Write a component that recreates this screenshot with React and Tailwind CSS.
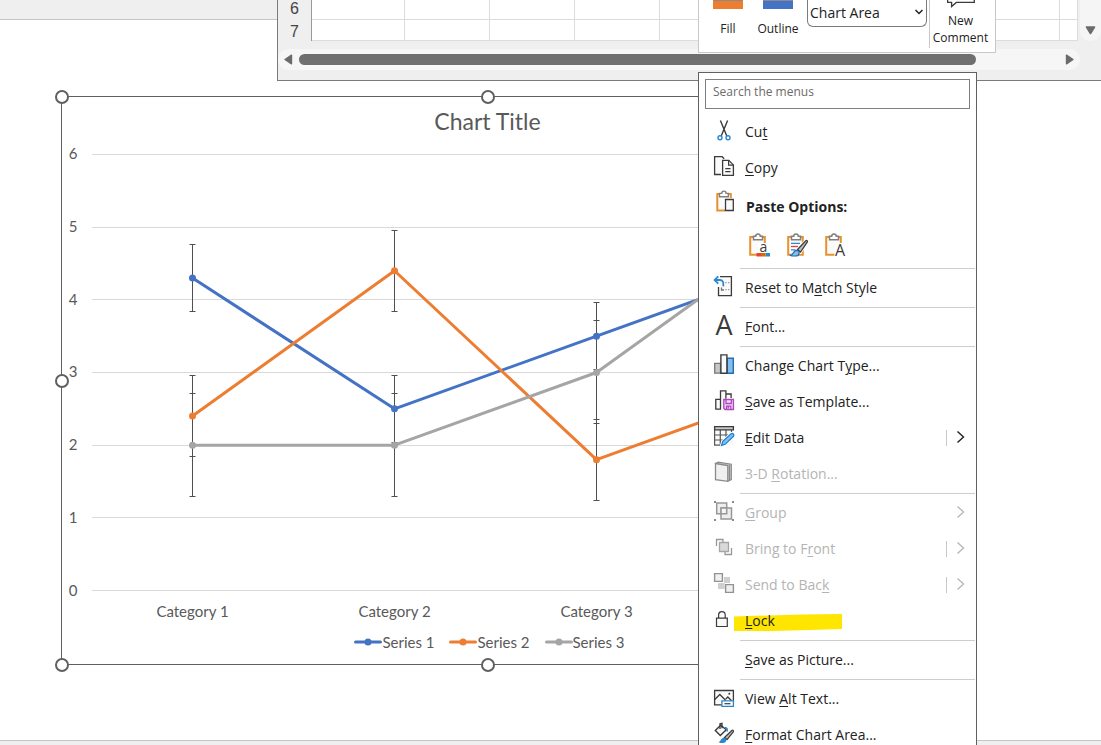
import React from "react";

const INK = "#3b3b3b";
const MUTED = "#a6a6a6";

function Icon({ children, className = "" }) {
  return (
    <svg width="24" height="24" viewBox="-2 -2 24 24" fill="none" aria-hidden="true" className={`shrink-0 overflow-visible ${className}`}>
      {children}
    </svg>
  );
}

function Clipboard() {
  return (
    <>
      <path d="M5.5 2H2.2v17.8h14.6V2h-3.3" fill="#fafafa" stroke="#e8912d" strokeWidth="2" />
      <path d="M5.5 4.7V1.2h2.2c0-3 4.6-3 4.6 0h2.2v3.5z" fill="#fff" stroke="#808080" strokeWidth="1.5" />
    </>
  );
}

const icons = {
  cut: (
    <Icon>
      <path d="M6.4-1.6 12.8 14M13.6-1.6 7.2 14" stroke={INK} strokeWidth="1.4" />
      <circle cx="6" cy="15.7" r="2" fill="#fff" stroke="#2b88d0" strokeWidth="1.4" />
      <circle cx="14" cy="15.7" r="2" fill="#fff" stroke="#2b88d0" strokeWidth="1.4" />
    </Icon>
  ),
  copy: (
    <Icon>
      <path d="M7 16.5H.6V-1.3h7.6l2 2" fill="#fafafa" stroke={INK} strokeWidth="1.3" />
      <path d="M8.6 2.3h6.2l4.6 4.6v10.5H8.6z" fill="#fafafa" stroke={INK} strokeWidth="1.3" />
      <path d="M14.6 2.3v4.8h4.8M11.3 10.7h5.2M11.3 13.7h5.2" stroke={INK} strokeWidth="1.2" />
    </Icon>
  ),
  paste: (
    <Icon>
      <path d="M6 2H3.3v16.5H11M14 2h2.8v4" fill="#fafafa" stroke="#e8912d" strokeWidth="2" />
      <path d="M5.5 4.7V1.4h2.2c0-3 4.4-3 4.4 0h2.2v3.3z" fill="#fff" stroke="#808080" strokeWidth="1.4" />
      <path d="M11.5 7.5h7.8v11h-7.8z" fill="#fafafa" stroke={INK} strokeWidth="1.3" />
    </Icon>
  ),
  reset: (
    <Icon>
      <path d="M4.500-1.300h12.900v18.900H4.500z" fill="#fafafa" />
      <path d="M6-1.300h11.400v18.900H4.500V9" stroke={INK} strokeWidth="1.300" />
      <path d="M11.500 4.700h1m1.800 0h1M11.500 11.700h1m1.800 0h1M7.500 9.500v2.500h2.500" stroke="#777" strokeWidth="1.300" />
      <path d="M.8 2h5c3 0 4 2.400 3.500 6.300M4.300-1.700.6 2l3.700 3.700" stroke="#fafafa" strokeWidth="3" />
      <path d="M.8 2h5c3 0 4 2.400 3.500 6.300M4.300-1.700.6 2l3.700 3.700" stroke="#2b88d0" strokeWidth="1.800" />
    </Icon>
  ),
  font: (
    <Icon>
      <text x="10" y="17.500" textAnchor="middle" fontSize="27" fill={INK} className="font-['Open_Sans',sans-serif]">A</text>
    </Icon>
  ),
  chart: (
    <Icon>
      <path d="M.7 7.300h5.800v9.900H.7z" fill="#c8c8c8" stroke="#777" strokeWidth="1.300" />
      <path d="M13.300 2.300h6v14.900h-6z" fill="#83beec" stroke="#1e6fb8" strokeWidth="1.400" />
      <path d="M6.900-1.100h6v18.300h-6z" fill="#fafafa" stroke={INK} strokeWidth="1.400" />
    </Icon>
  ),
  template: (
    <Icon>
      <path d="M1.800 7.300h4.700v9.900H1.800zM6.500 17.200V-1.200h5.400v8M11.900 2h5.200v4" fill="#fafafa" stroke={INK} strokeWidth="1.300" />
      <path d="M9.800 7.500h9.600v10H11l-1.200-1.300z" fill="#f1dff3" stroke="#b146c2" strokeWidth="1.400" />
      <path d="M12 7.500v4h5.300v-4M12.500 17.300v-3.200h4.300v3.200M14.300 14.500v2" stroke="#b146c2" strokeWidth="1.300" />
    </Icon>
  ),
  edit: (
    <Icon>
      <path d="M.6-1.200h18.800v18H.6z" fill="#fafafa" />
      <path d="M.6 2v15.200h6.500M6.300 2v15M12 2v9M.6 7h14M.6 12h10M17.500 2v3" stroke="#555" strokeWidth="1.200" />
      <path d="M.6-1.300h18.800v3.100H.6z" fill="#c8c8c8" stroke={INK} strokeWidth="1.300" />
      <path d="m7.500 17.500 1.300-4.200 8.300-7.500c1.600-1.200 3.700.8 2.400 2.500l-8 7.800z" fill="#83beec" stroke="#fff" strokeWidth="3" />
      <path d="m7.500 17.500 1.300-4.200 8.300-7.500c1.600-1.200 3.700.8 2.400 2.500l-8 7.800z" fill="#83beec" stroke="#1e7fd0" strokeWidth="1.200" />
    </Icon>
  ),
  rotate: (
    <Icon>
      <path d="m1.500-.5 2.700-1.300L17.300.2v15.400l-3.500 1.700z" fill="#c8c8c8" stroke="#8a8a8a" strokeWidth="1.200" />
      <path d="m1.500-.5 12.300 2v15.800L1.500 15.600z" fill="#f0f0f0" stroke="#8a8a8a" strokeWidth="1.300" />
      <path d="M15.500 1v15.300" stroke="#8a8a8a" />
    </Icon>
  ),
  group: (
    <Icon>
      <path d="M2.700 0h10v10.700h-10z" fill="#eee" stroke="#989898" strokeWidth="1.500" />
      <path d="M7 5h10.500v11H7z" fill="#eee" stroke="#989898" strokeWidth="1.500" />
      <path d="M7 5h5.700v5.700H7z" fill="#f6f6f6" stroke="#989898" strokeWidth="1.500" />
      <path d="M0-2h2v2H0zM18-2h2v2h-2zM0 16h2v2H0zM18 16h2v2h-2z" fill="#8a8a8a" />
    </Icon>
  ),
  front: (
    <Icon>
      <path d="M2.500 7V.500H9v3M17.500 9v6.500H11v-3" stroke="#989898" strokeWidth="1.300" />
      <path d="M5.500 3.500h9v9h-9z" fill="#d9d9d9" stroke={MUTED} strokeWidth="1.300" />
    </Icon>
  ),
  back: (
    <Icon>
      <path d="M10 2h6v6h-6zM4 8h6.500v6H4z" fill="#d0d0d0" />
      <path d="M.6-1.400h7.800v7.800H.6zM11.600 9.600h7.800v7.800h-7.800z" fill="#f0f0f0" stroke="#929292" strokeWidth="1.400" />
    </Icon>
  ),
  lock: (
    <Icon>
      <path d="M2.500 7.200h10.800v8.300H2.500z" fill="#fafafa" stroke={INK} strokeWidth="1.200" />
      <path d="M4.600 7V4c0-4.400 6.600-4.400 6.600 0v3" stroke={INK} strokeWidth="1.200" />
    </Icon>
  ),
  alt: (
    <Icon>
      <path d="M.6 1.500h18.800v14.300H.6z" fill="#fafafa" stroke={INK} strokeWidth="1.300" />
      <path d="m.8 10.500 5-5 6 6m0-1.500 2-2 4 4" stroke={INK} strokeWidth="1.300" />
      <circle cx="15.300" cy="4.700" r="1" fill={INK} />
      <path d="M7.900 11.900h11.500v5.500H7.900z" fill="#fff" stroke="#2b88d0" strokeWidth="1.300" />
      <path d="M10.500 14.700h6" stroke={INK} strokeWidth="1.200" />
    </Icon>
  ),
  format: (
    <Icon>
      <path d="m1.300 5.500 5.400-5.300 5.600 4.600-6 5.800z" fill="#fafafa" stroke={INK} strokeWidth="1.400" />
      <path d="M6 4V-1.200l2-.5v5" stroke={INK} strokeWidth="1.300" />
      <path d="M11 2.500c2 0 2.500 1.500 2 4" stroke="#2b88d0" strokeWidth="1.600" />
      <path d="m10.500 12.500 7.300-7c1.300-.8 2.200.4 1.500 1.500L13 14.700z" fill="#bbb" stroke={INK} strokeWidth="1.200" />
      <path d="M4.500 17c2.500 0 2.300-4.200 5.300-4.200 3.400.4 3.200 5.200-.8 5.200-2 0-3.500 0-4.500-1z" fill="#2b88d0" />
    </Icon>
  ),
};

// An underscore marks the access key that follows it.
function Label({ text }) {
  const at = text.indexOf("_");
  if (at < 0) return text;
  return (
    <>
      {text.slice(0, at)}
      <u className="underline decoration-1 underline-offset-2">{text[at + 1]}</u>
      {text.slice(at + 2)}
    </>
  );
}

function Item({ icon, text, disabled, arrow, split, highlight }) {
  return (
    <button
      type="button"
      role="menuitem"
      disabled={disabled}
      className="relative isolate flex h-9 w-full items-center gap-[9px] pr-2.5 pl-[13px] text-left text-[#222] disabled:text-[#b4b4b4]"
    >
      {highlight && (
        <svg aria-hidden="true" width="108" height="18" viewBox="0 0 108 18" className="absolute top-[11px] left-[35px] -z-10">
          <path d="M0 2.500 66 .5l42-.5v15L40 17H0z" fill="#ffe600" />
        </svg>
      )}
      {icon ? icons[icon] : <span className="w-6 shrink-0" />}
      <span className="flex-1 whitespace-nowrap">
        <Label text={text} />
      </span>
      {split && <span className="h-4 w-px bg-[#c8c8c8]" />}
      {arrow && (
        <svg aria-hidden="true" width="10" height="14" viewBox="0 0 10 14" fill="none" className={disabled ? "text-[#b8b8b8]" : "text-[#222]"}>
          <path d="m1.500 .5 6 5.500-6 5.500" stroke="currentColor" strokeWidth="1.400" />
        </svg>
      )}
    </button>
  );
}

function Separator() {
  return <div role="separator" className="my-px mr-px ml-[41px] h-px bg-[#cdcdcd]" />;
}

function ContextMenu() {
  return (
    <div
      role="menu"
      className="absolute top-[72px] left-[698px] w-[279px] border border-[#606060] bg-white font-['Open_Sans','Noto_Sans',sans-serif] text-[14px] leading-5"
    >
      <div className="px-1.5 pt-1.5 pb-[5px]">
        <input
          type="text"
          aria-label="Search the menus"
          placeholder="Search the menus"
          className="block h-[30px] w-full border border-[#7f7f7f] bg-white px-[7px] pb-1.5 text-[12px] placeholder:text-[#6b6b6b]"
        />
      </div>
      <Item icon="cut" text="Cu_t" />
      <Item icon="copy" text="_Copy" />
      <div className="flex h-[41px] items-center gap-2.5 pl-[13px] font-bold text-[#222]">
        <div className="flex h-full items-start pt-1">{icons.paste}</div>
        <span>Paste Options:</span>
      </div>
      <div className="flex h-10 gap-3.5 pt-1.5 pl-[47px]">
        <button type="button" aria-label="Use destination theme" className="size-6">
          <Icon>
            <Clipboard />
            <path d="M9.500 8h14v14h-14z" fill="#fff" />
            <text x="15.500" y="16.500" textAnchor="middle" fontSize="14" fill={INK} className="font-['Open_Sans',sans-serif]">a</text>
            <path d="M8.500 18H13v3.500H8.500z" fill="#e8413c" />
            <path d="M13 18h4.700v3.500H13z" fill="#d86a00" />
            <path d="M17.700 18H22v3.500h-4.300z" fill="#2b88d0" />
          </Icon>
        </button>
        <button type="button" aria-label="Keep source formatting" className="size-6">
          <Icon>
            <Clipboard />
            <path d="M5 8.300h9M5 14.800h5" stroke="#2b88d0" strokeWidth="1.300" />
            <path d="M5 11.500h7" stroke="#e8413c" strokeWidth="1.300" />
            <path d="m11.500 14.500 8.300-8.700c1-.8 2.200.3 1.500 1.400L14.500 17z" fill="#bbb" stroke="#fff" strokeWidth="3" />
            <path d="m11.500 14.500 8.300-8.700c1-.8 2.200.3 1.500 1.400L14.500 17z" fill="#bbb" stroke={INK} strokeWidth="1.200" />
            <path d="M4.500 20.300c3 0 2.500-4.800 6-5 3.800.4 3.600 5.700-1 5.700-2 0-4 .2-5-.7z" fill="#83beec" stroke="#1e6fb8" strokeWidth="1.200" />
          </Icon>
        </button>
        <button type="button" aria-label="Keep text only" className="size-6">
          <Icon>
            <Clipboard />
            <path d="M12 8h10v14H10z" fill="#fff" />
            <text x="16" y="20.500" textAnchor="middle" fontSize="16" fill={INK} className="font-['Open_Sans',sans-serif]">A</text>
          </Icon>
        </button>
      </div>
      <Separator />
      <Item icon="reset" text="Reset to M_atch Style" />
      <Separator />
      <Item icon="font" text="_Font..." />
      <Separator />
      <Item icon="chart" text="Change Chart T_ype..." />
      <Item icon="template" text="_Save as Template..." />
      <Item icon="edit" text="_Edit Data" arrow split />
      <Item icon="rotate" text="3-D _Rotation..." disabled />
      <Separator />
      <Item icon="group" text="_Group" disabled arrow />
      <Item icon="front" text="Bring to F_ront" disabled arrow split />
      <Item icon="back" text="Send to Bac_k" disabled arrow split />
      <Item icon="lock" text="_Lock" highlight />
      <Separator />
      <Item text="_Save as Picture..." />
      <Separator />
      <Item icon="alt" text="View _Alt Text..." />
      <Item icon="format" text="_Format Chart Area..." />
    </div>
  );
}

function MiniToolbar() {
  return (
    <div className="absolute top-0 left-[698px] flex h-[53px] w-[298px] border border-t-0 border-[#c8c8c8] bg-white font-['Open_Sans','Noto_Sans',sans-serif] text-[12px] leading-[17px] text-[#222]">
      <button type="button" className="flex w-[58px] flex-col items-center gap-[11px]">
        <span className="h-[9px] w-[30px] border-t border-[#8a8a8a] bg-[#ed7d31]" />
        Fill
      </button>
      <button type="button" className="flex w-[42px] flex-col items-center gap-[11px]">
        <span className="h-[9px] w-[30px] border-t border-[#8a8a8a] bg-[#4472c4]" />
        Outline
      </button>
      <div className="relative ml-2 h-[27px] w-[120px] overflow-hidden rounded-b-md border border-t-0 border-[#7a7a7a]">
        <select aria-label="Chart elements" defaultValue="Chart Area" className="block h-6 w-full appearance-none bg-transparent pl-0.5 text-[14px]">
          <option>Chart Area</option>
        </select>
        <svg aria-hidden="true" width="10" height="8" viewBox="0 0 10 8" fill="none" className="pointer-events-none absolute top-2 right-0.5">
          <path d="m1.500 2 3.500 3.500L8.500 2" stroke="#222" strokeWidth="1.500" />
        </svg>
      </div>
      <button type="button" className="ml-0.5 flex h-12 flex-1 flex-col items-center border-l border-[#c8c8c8] pr-1">
        <svg aria-hidden="true" width="28" height="12" viewBox="0 0 28 12" fill="none" className="shrink-0">
          <path d="M.6-2v4.400h4v4.200l4.700-4.200h18V-2" stroke={INK} strokeWidth="1.300" />
        </svg>
        <span>New<br />Comment</span>
      </button>
    </div>
  );
}

const columns = [93, 85, 85, 85, 85, 85, 85, 60, 85, 18];

function SheetWindow() {
  return (
    <section aria-label="Worksheet" className="absolute top-0 right-0 left-[277px] flex h-[81px] flex-col border-b border-l border-[#7a7a7a] bg-[#efefef]">
      <div className="flex h-[41px] justify-between overflow-hidden">
        <table className="table-fixed border-separate border-spacing-0 font-['Liberation_Sans',sans-serif] text-[16px] leading-[18px] text-[#444]" style={{ width: 800 }}>
          <colgroup>
            <col className="w-[34px]" />
            {columns.map((w, i) => (
              <col key={i} style={{ width: w }} />
            ))}
          </colgroup>
          <tbody>
            {[6, 7].map((n) => (
              <tr key={n} className={n === 6 ? "h-5 align-top" : "h-[21px] align-bottom"}>
                <th scope="row" className="border-r border-[#9a9a9a] p-0 font-normal">{n}</th>
                {columns.map((_, i) => (
                  <td key={i} className="border-r border-b border-[#dcdcdc] bg-white p-0" />
                ))}
              </tr>
            ))}
          </tbody>
        </table>
        <div className="flex w-[21px] items-end justify-center rounded-b-full bg-[#f5f5f5] pb-1.5">
          <svg aria-hidden="true" width="11" height="9" viewBox="0 0 11 9">
            <path d="M1.500 1h8L5.500 7.500z" fill="#6b6b6b" stroke="#6b6b6b" strokeWidth="1.600" strokeLinejoin="round" />
          </svg>
        </div>
      </div>
      <div className="mt-2 mr-[21px] flex h-[21px] items-center rounded-full bg-[#f6f6f6] px-[5px]">
        <svg aria-hidden="true" width="10" height="11" viewBox="0 0 10 11">
          <path d="M8.500 1.200v8.600L2 5.500z" fill="#6b6b6b" stroke="#6b6b6b" strokeWidth="1.400" strokeLinejoin="round" />
        </svg>
        <div className="ml-1.5 flex-1 pr-[89px]">
          <div className="h-[11px] rounded-full bg-[#6f6f6f]" />
        </div>
        <svg aria-hidden="true" width="10" height="11" viewBox="0 0 10 11">
          <path d="M1.500 1.200v8.600L8 5.500z" fill="#6b6b6b" stroke="#6b6b6b" strokeWidth="1.400" strokeLinejoin="round" />
        </svg>
      </div>
    </section>
  );
}

const series = [
  { name: "Series 1", color: "#4472c4", values: [4.3, 2.5, 3.5, 4.5], error: 33.5 },
  { name: "Series 2", color: "#ed7d31", values: [2.4, 4.4, 1.8, 2.8], error: 40.5 },
  { name: "Series 3", color: "#a5a5a5", values: [2, 2, 3, 5], error: 51.5 },
];
const xAt = (i) => 130.5 + i * 202;
const yAt = (v) => 453.5 - v * 72.67;
const snap = (n) => Math.floor(n) + 0.5;

function Plot() {
  return (
    <svg width="851" height="484" viewBox="0 0 851 484" role="img" aria-label="Line chart of three series" className="block font-[Lato,sans-serif] text-[15px]" fill="#595959">
      {[0, 1, 2, 3, 4, 5, 6].map((v) => (
        <g key={v}>
          <path d={`M30 ${snap(yAt(v))}H837`} stroke="#d9d9d9" />
          <text x="11" y={yAt(v) + 5} textAnchor="middle">{v}</text>
        </g>
      ))}
      {series.map((s) => (
        <g key={s.name} stroke="#505050">
          {s.values.map((v, i) => {
            const top = snap(yAt(v) - s.error);
            const bottom = snap(yAt(v) + s.error);
            return <path key={i} d={`M${xAt(i)} ${top}V${bottom}M${xAt(i) - 3} ${top}h6M${xAt(i) - 3} ${bottom}h6`} />;
          })}
        </g>
      ))}
      {series.map((s) => (
        <g key={s.name}>
          <polyline points={s.values.map((v, i) => `${xAt(i)},${yAt(v)}`).join(" ")} fill="none" stroke={s.color} strokeWidth="3" strokeLinejoin="round" />
          {s.values.map((v, i) => (
            <circle key={i} cx={xAt(i)} cy={yAt(v)} r="3.5" fill={s.color} />
          ))}
        </g>
      ))}
      {[1, 2, 3].map((n, i) => (
        <text key={n} x={xAt(i)} y="480" textAnchor="middle">Category {n}</text>
      ))}
    </svg>
  );
}

function Handle({ className }) {
  return <span className={`absolute size-3.5 rounded-full border-2 border-[#606060] bg-white ${className}`} />;
}

function Chart() {
  return (
    <figure className="relative mt-[76px] ml-[61px] flex h-[569px] w-[853px] flex-col border border-[#606060]">
      <figcaption className="h-10 pt-3 text-center font-[Lato,sans-serif] text-[23px] leading-6 text-[#595959]">Chart Title</figcaption>
      <Plot />
      <ul className="mt-[11px] flex justify-center gap-[15px] pl-1 font-[Lato,sans-serif] text-[15px] leading-5 text-[#595959]">
        {series.map((s) => (
          <li key={s.name} className="flex items-center">
            <svg aria-hidden="true" width="28" height="8" viewBox="0 0 28 8">
              <path d="M1.500 4h25" stroke={s.color} strokeWidth="3" strokeLinecap="round" />
              <circle cx="14" cy="4" r="3.500" fill={s.color} />
            </svg>
            {s.name}
          </li>
        ))}
      </ul>
      <Handle className="-top-[7px] -left-[7px]" />
      <Handle className="-top-[7px] left-[419px]" />
      <Handle className="top-[277px] -left-[7px]" />
      <Handle className="-bottom-2 -left-[7px]" />
      <Handle className="-bottom-2 left-[419px]" />
    </figure>
  );
}

export default function App() {
  return (
    <div className="relative flex h-screen flex-col overflow-hidden bg-white">
      <header className="h-5 shrink-0 border-b border-[#c6c6c6] bg-[#efefef]" />
      <main className="min-h-0 flex-1">
        <Chart />
      </main>
      <footer className="h-[5px] shrink-0 border-t border-[#c6c6c6] bg-[#efefef]" />
      <SheetWindow />
      <MiniToolbar />
      <ContextMenu />
    </div>
  );
}
